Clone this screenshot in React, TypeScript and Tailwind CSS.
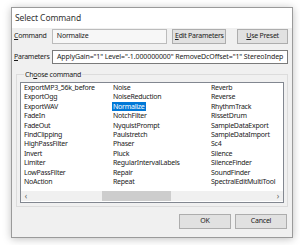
import React from "react";

const col1 = ["ExportMP3_56k_before", "ExportOgg", "ExportWAV", "FadeIn", "FadeOut", "FindClipping", "HighPassFilter", "Invert", "Limiter", "LowPassFilter", "NoAction"];
const col2 = ["Noise", "NoiseReduction", "Normalize", "NotchFilter", "NyquistPrompt", "Paulstretch", "Phaser", "Pluck", "RegularIntervalLabels", "Repair", "Repeat"];
const col3 = ["Reverb", "Reverse", "RhythmTrack", "RissetDrum", "SampleDataExport", "SampleDataImport", "Sc4", "Silence", "SilenceFinder", "SoundFinder", "SpectralEditMultiTool"];

const Button = ({ children, className = "" }: { children: React.ReactNode; className?: string }) => (
    <div className={`h-[15px] flex items-center justify-center whitespace-nowrap bg-[#e1e1e1] border border-[#adadad] text-[#1b1b1b] ${className}`}>
        {children}
    </div>
);

const Column = ({ items, className = "" }: { items: string[]; className?: string }) => (
    <div className={`flex flex-col ${className}`}>
        {items.map((item) => (
            <div key={item} className="h-[9.4px] leading-[9.4px] whitespace-nowrap">
                {item === "Normalize" ? (
                    <span className="bg-[#0078d7] text-white px-[1px] inline-block">{item}</span>
                ) : (
                    <span className="px-[1px]">{item}</span>
                )}
            </div>
        ))}
    </div>
);

export default function App() {
    return (
        <div
            className="w-[300px] h-[245px] bg-white pt-[7px] pl-[11px] overflow-hidden text-[7px] tracking-[-0.25px] text-[#1b1b1b]"
            style={{ fontFamily: "'Noto Sans', 'Open Sans', sans-serif" }}
        >
            <div className="w-[282px] h-[231px] border border-[#9a9a9a] shadow-[0_1px_8px_rgba(0,0,0,0.25)] flex flex-col bg-[#f0f0f0]">
                {/* title bar */}
                <div className="h-[20px] bg-white flex items-center pl-[3px] text-[8.5px] tracking-[-0.1px] text-[#333]">
                    Select Command
                </div>

                <div className="flex-1 flex flex-col pl-[2px] pr-[4px] pt-[1px]">
                    {/* command row */}
                    <div className="flex items-center h-[15px]">
                        <div className="w-[38px]"><span className="underline">C</span>ommand</div>
                        <div className="w-[116px] h-full bg-[#f7f7f7] border border-[#bcbcbc] flex items-center pl-[4px]">Normalize</div>
                        <Button className="ml-[5px] w-[54px]"><span className="underline">E</span>dit Parameters</Button>
                        <Button className="ml-[11px] w-[51px]"><span className="underline">U</span>se Preset</Button>
                    </div>

                    {/* parameters row */}
                    <div className="flex items-center h-[14px] mt-[6px]">
                        <div className="w-[38px]"><span className="underline">P</span>arameters</div>
                        <div className="w-[236px] h-full bg-white border border-[#7a7a7a] flex items-center pl-[4px] overflow-hidden whitespace-nowrap tracking-[-0.1px]">
                            ApplyGain="1" Level="-1.000000000" RemoveDcOffset="1" StereoIndep
                        </div>
                    </div>

                    {/* group box */}
                    <fieldset className="ml-[2px] w-[272px] mt-[6px] border border-[#dcdcdc] px-[3px] pb-[3px]">
                        <legend className="ml-[4px] px-[1px] leading-[9px]">
                            Ch<span className="underline">o</span>ose command
                        </legend>
                        <div className="mt-[3px] h-[121px] bg-white border border-[#828790] flex flex-col">
                            <div className="flex pl-[2px] flex-1 overflow-hidden">
                                <Column items={col1} className="w-[89px]" />
                                <Column items={col2} className="w-[98px]" />
                                <Column items={col3} />
                            </div>
                            <div className="h-[10px] flex items-center bg-[#f0f0f0] mb-[1px] text-[#606060] tracking-normal">
                                <div className="w-[10px] text-center text-[8px] leading-[8px]">‹</div>
                                <div className="ml-[71px] w-[69px] h-full bg-[#cdcdcd]" />
                                <div className="flex-1" />
                                <div className="w-[10px] text-center text-[8px] leading-[8px]">›</div>
                            </div>
                        </div>
                    </fieldset>

                    {/* buttons */}
                    <div className="flex justify-end mt-[7px] pr-[1px]">
                        <Button className="w-[52px]">OK</Button>
                        <Button className="ml-[4px] w-[52px]">Cancel</Button>
                    </div>
                </div>
            </div>
        </div>
    );
}
